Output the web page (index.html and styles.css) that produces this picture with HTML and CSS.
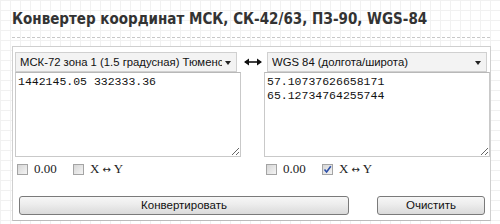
FILE: index.html
```html
<!DOCTYPE html>
<html lang="ru">
<head>
<meta charset="utf-8">
<link rel="stylesheet" href="styles.css">
</head>
<body>
<h1 class="title">Конвертер координат МСК, СК-42/63, ПЗ-90, WGS-84</h1>
<div class="sep"></div>
<div class="panel">
  <div class="cols">
    <div class="col">
      <div class="sel sel-left"><span class="sel-text">МСК-72 зона 1 (1.5 градусная) Тюменская область</span><span class="arrow"></span></div>
      <textarea class="ta">1442145.05 332333.36</textarea>
      <div class="opts">
        <label class="opt"><span class="box"></span><span class="lbl">0.00</span></label>
        <label class="opt"><span class="box"></span><span class="lbl">X<span class="lr">↔</span>Y</span></label>
      </div>
    </div>
    <div class="mid">
      <svg width="18" height="8" viewBox="0 0 18 8"><path d="M1 4H17" stroke="#111" stroke-width="1.6"/><path d="M0 4L5 0.5V7.5Z M18 4L13 0.5V7.5Z" fill="#111"/></svg>
    </div>
    <div class="col">
      <div class="sel sel-right"><span class="sel-text">WGS 84 (долгота/широта)</span><span class="arrow"></span></div>
      <textarea class="ta">57.10737626658171
65.12734764255744</textarea>
      <div class="opts">
        <label class="opt"><span class="box"></span><span class="lbl">0.00</span></label>
        <label class="opt"><span class="box checked"><svg width="9" height="9" viewBox="0 0 9 9"><path d="M1.5 4.5L3.6 7L7.8 1.2" stroke="#2b4fa8" stroke-width="1.6" fill="none"/></svg></span><span class="lbl">X<span class="lr">↔</span>Y</span></label>
      </div>
    </div>
  </div>
  <div class="btns">
    <button class="btn btn-conv">Конвертировать</button>
    <button class="btn btn-clear">Очистить</button>
  </div>
</div>
</body>
</html>
```
FILE: styles.css
```css
html, body { margin: 0; padding: 0; }
body {
  width: 500px;
  height: 224px;
  overflow: hidden;
  background-color: #fff;
  background-image:
    linear-gradient(to right, #f1f1f1 1px, transparent 1px),
    linear-gradient(to bottom, #f1f1f1 1px, transparent 1px);
  background-size: 10px 10px;
  font-family: "Liberation Sans", Arial, sans-serif;
}
.title {
  margin: 0;
  padding: 10px 0 0 12px;
  height: 20px;
  font-family: "DejaVu Sans Condensed", "DejaVu Sans", Verdana, sans-serif;
  font-stretch: condensed;
  font-weight: bold;
  font-size: 15px;
  line-height: 18px;
  color: #333;
}
.sep {
  margin: 7px 10px 0 12px;
  border-top: 1px dashed #c8c8c8;
  height: 0;
}
.panel {
  margin: 8px 8px 0 12px;
  width: 479px;
  height: 175px;
  background: #fff;
  border: 1px solid #cfcfcf;
  border-bottom-color: #bbb;
  box-sizing: border-box;
  padding: 5px 0 0 2px;
}
.cols {
  display: flex;
}
.col {
  width: 226px;
  display: flex;
  flex-direction: column;
}
.mid {
  width: 24px;
  display: flex;
  justify-content: center;
  padding-top: 6px;
  box-sizing: border-box;
}
.mid svg { display: block; }
.sel {
  position: relative;
  height: 20px;
  box-sizing: border-box;
  border: 1px solid #d0d0d0;
  background: #f3f3f3;
  font-size: 11.3px;
  line-height: 18px;
  color: #111;
  padding: 0 14px 0 4px;
  white-space: nowrap;
  overflow: hidden;
}
.sel-left { width: 222px; }
.sel-right { width: 220px; margin-left: 3px; }
.sel-text { display: block; overflow: hidden; }
.arrow {
  position: absolute;
  right: 5px;
  top: 8px;
  width: 0;
  height: 0;
  border-left: 3.5px solid transparent;
  border-right: 3.5px solid transparent;
  border-top: 4px solid #222;
}
.ta {
  display: block;
  width: 226px;
  height: 85px;
  margin: 0;
  box-sizing: border-box;
  border: 1px solid #c9c9c9;
  border-top-color: #b8b8b8;
  padding: 2px 2px;
  font-family: "Liberation Mono", "Courier New", monospace;
  font-size: 11.5px;
  line-height: 14px;
  color: #111;
  resize: both;
  outline: none;
  background: #fff;
}
.opts {
  display: flex;
  padding: 5px 0 0 2px;
  height: 14px;
}
.opt {
  display: flex;
  align-items: center;
  font-family: "Liberation Serif", "Times New Roman", serif;
  font-size: 13px;
  color: #222;
}
.opt:first-child { width: 56px; }
.box {
  width: 9px;
  height: 9px;
  border: 1px solid #a4a4a4;
  background: linear-gradient(135deg, #d6d6d6, #f4f4f4);
  margin-right: 6px;
  display: flex;
  align-items: center;
  justify-content: center;
}
.box svg { display: block; }
.lr {
  font-family: "DejaVu Sans", sans-serif;
  font-size: 10px;
  margin: 0 3px;
}
.btns {
  display: flex;
  padding: 20px 0 0 4px;
}
.btn {
  height: 19px;
  box-sizing: border-box;
  border: 1px solid #7a7a7a;
  border-radius: 3px;
  background: linear-gradient(to bottom, #f7f7f7 0%, #ececec 45%, #dadada 100%);
  font-family: "Liberation Sans", Arial, sans-serif;
  font-size: 11.5px;
  color: #111;
  padding: 0;
  line-height: 17px;
}
.btn-conv { width: 330px; }
.btn-clear { width: 108px; margin-left: 28px; }
```
